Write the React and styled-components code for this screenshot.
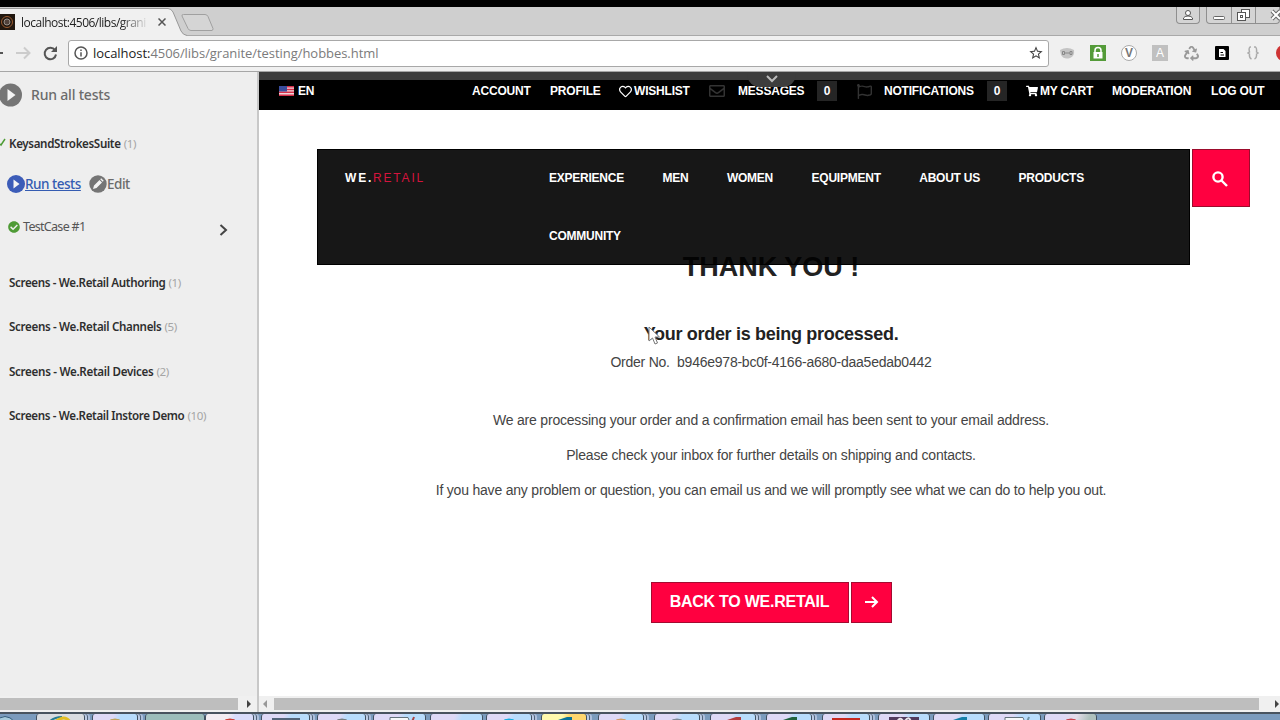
import React from 'react';
import styled, { createGlobalStyle } from 'styled-components';
import {
  FaCheckCircle,
  FaRegEnvelope,
  FaRegFlag,
  FaRegHeart,
  FaRecycle,
  FaShoppingCart,
} from 'react-icons/fa';
import { MdStarBorder } from 'react-icons/md';

const GlobalStyle = createGlobalStyle`
  * {
    box-sizing: border-box;
  }
  body {
    margin: 0;
    overflow: hidden;
    font-family: 'Liberation Sans', Arial, sans-serif;
  }
  svg {
    display: block;
    flex-shrink: 0;
  }
`;

const Screen = styled.div`
  display: flex;
  flex-direction: column;
  width: 1280px;
  height: 720px;
  overflow: hidden;
  background: #fff;
  border-top: 7px solid #000;
`;

/* browser */

const TabStrip = styled.div`
  display: flex;
  height: 29px;
  background: #cfcfcf;
  border-bottom: 1px solid #a9a9a9;
`;

const Tab = styled.div`
  position: relative;
  display: flex;
  align-items: center;
  width: 181px;
  height: 29px;
  padding-top: 1px;
  font: 12px 'Open Sans', sans-serif;
  color: #222;
  .shape {
    position: absolute;
    left: 0;
    top: 0;
  }
  .favicon,
  .close {
    position: relative;
  }
  .close {
    margin-left: 9px;
  }
`;

const TabTitle = styled.span`
  position: relative;
  width: 128px;
  margin-left: 6px;
  white-space: nowrap;
  letter-spacing: -0.5px;
  mask-image: linear-gradient(90deg, #000 78%, transparent);
`;

const NewTab = styled.div`
  padding-top: 7px;
`;

const WindowButtons = styled.div`
  display: flex;
  gap: 6px;
  margin-left: auto;
`;

const ButtonGroup = styled.div`
  display: flex;
  height: 17px;
  border: 1px solid #8f8f8f;
  border-top: 0;
  border-radius: 0 0 4px 4px;
  background: #d4d4d4;
`;

const WindowButton = styled.div`
  display: flex;
  align-items: center;
  justify-content: center;
  width: ${({ $width }) => $width}px;
  & + & {
    border-left: 1px solid #8f8f8f;
  }
`;

const Toolbar = styled.div`
  display: flex;
  align-items: center;
  height: 36px;
  flex-shrink: 0;
  padding-bottom: 1px;
  background: #f0f0f0;
  border-bottom: 1px solid #a6a6a6;
`;

const NavButtons = styled.div`
  width: 68px;
  flex-shrink: 0;
`;

const AddressBar = styled.div`
  display: flex;
  align-items: center;
  width: 981px;
  height: 27px;
  flex-shrink: 0;
  padding: 0 4px 0 5px;
  background: #fff;
  border: 1px solid #a8a8a8;
  border-radius: 3px;
`;

const Url = styled.span`
  flex: 1;
  margin-left: 5px;
  font: 13px 'Open Sans', sans-serif;
  letter-spacing: -0.05px;
  color: #7b7b7b;
  b {
    font-weight: 400;
    color: #222;
  }
`;

const Extensions = styled.div`
  display: flex;
  align-items: center;
  gap: 15px;
  margin-left: 10px;
`;

const Extension = styled.div`
  display: flex;
  align-items: center;
  justify-content: center;
  flex-shrink: 0;
  width: 16px;
  height: 16px;
  color: ${({ $color }) => $color || '#fff'};
  background: ${({ $bg }) => $bg || 'transparent'};
  border: ${({ $border }) => $border || '0'};
  border-radius: ${({ $radius }) => $radius || 0};
  font: 12px 'Liberation Sans', sans-serif;
`;

/* page */

const Body = styled.div`
  display: flex;
  height: 640px;
  flex-shrink: 0;
`;

const Sidebar = styled.aside`
  display: flex;
  flex-direction: column;
  width: 259px;
  flex-shrink: 0;
  background: #eee;
  border-right: 2px solid #c8c8c8;
  font-family: 'Noto Sans', sans-serif;
  color: #6b6b6b;
`;

const RunAll = styled.div`
  display: flex;
  align-items: center;
  gap: 9px;
  height: 49px;
  padding-bottom: 3px;
  font-size: 14px;
  font-weight: 500;
  letter-spacing: -0.2px;
  span {
    margin-top: -2px;
  }
`;

const Suite = styled.div`
  display: flex;
  align-items: center;
  height: 44.5px;
  padding-left: ${({ $open }) => ($open ? 0 : 9)}px;
  font-size: 11.6px;
  font-weight: 600;
  letter-spacing: ${({ $spacing }) => $spacing || -0.36}px;
  color: #2e2e2e;
  white-space: nowrap;
  span {
    margin-left: 3px;
    font-weight: 400;
    letter-spacing: -0.4px;
    color: #a5a5a5;
  }
`;

const SuiteActions = styled.div`
  display: flex;
  align-items: center;
  height: 37px;
  padding-left: 7px;
  font-size: 13.5px;
  font-weight: 500;
  letter-spacing: -0.48px;
`;

const Action = styled.a`
  display: flex;
  align-items: center;
  width: ${({ $width }) => $width}px;
  color: ${({ $active }) => ($active ? '#355cb2' : '#6b6b6b')};
  white-space: nowrap;
  span {
    text-decoration: ${({ $active }) => ($active ? 'underline' : 'none')};
  }
`;

const TestCase = styled.div`
  display: flex;
  align-items: center;
  height: 48px;
  margin-bottom: 9.5px;
  padding: 0 29px 0 8px;
  font-size: 12.5px;
  letter-spacing: -0.7px;
  color: #555;
  span {
    flex: 1;
    margin-left: 3px;
  }
  .chevron {
    margin-top: 6px;
  }
`;

const Scrollbar = styled.div`
  display: flex;
  align-items: center;
  height: 16px;
  margin-top: auto;
  padding: 0 ${({ $right }) => $right}px 1px ${({ $left }) => $left || 0}px;
  background: #f0f0f0;
`;

const Thumb = styled.div`
  flex: 1;
  height: 12px;
  margin: 0 ${({ $gap }) => $gap}px 0 ${({ $before }) => $before || 0}px;
  background: #bebebe;
`;

const Site = styled.main`
  display: flex;
  flex-direction: column;
  flex: 1;
  min-width: 0;
  background: #fff;
`;

const AuthorBar = styled.div`
  position: relative;
  z-index: 3;
  height: 8px;
  flex-shrink: 0;
  background: #3d3d3d;
`;

const AuthorToggle = styled.div`
  position: absolute;
  left: 488px;
  top: 2px;
  display: flex;
  justify-content: center;
  width: 49px;
  height: 13px;
  padding-top: 1px;
  background: #3d3d3d;
  border-radius: 0 0 14px 14px;
`;

const TopNav = styled.nav`
  display: flex;
  align-items: center;
  height: 30px;
  flex-shrink: 0;
  padding: 0 0 8px 20px;
  background: #000;
  color: #fff;
  font-size: 12px;
  font-weight: 700;
  letter-spacing: -0.2px;
  white-space: nowrap;
`;

const TopLink = styled.div`
  display: flex;
  align-items: center;
  width: ${({ $width }) => $width}px;
  flex-shrink: 0;
  gap: ${({ $gap }) => $gap || 2}px;
  svg {
    color: ${({ $dim }) => ($dim ? '#333' : '#fff')};
  }
`;

const Count = styled.div`
  width: 20px;
  height: 20px;
  margin-right: ${({ $after }) => $after}px;
  flex-shrink: 0;
  line-height: 20px;
  text-align: center;
  background: #252525;
`;

const Header = styled.header`
  position: relative;
  z-index: 2;
  display: flex;
  gap: 2px;
  flex-shrink: 0;
  margin: 39px 30px 0 58px;
`;

const MainNav = styled.div`
  display: flex;
  width: 873px;
  height: 116px;
  padding-left: 27px;
  background: rgba(0, 0, 0, 0.91);
  border: 1px solid #000;
  font-size: 12px;
  font-weight: 700;
  line-height: 56px;
  color: #fff;
`;

const Logo = styled.div`
  width: 204px;
  letter-spacing: 1.8px;
  span {
    font-weight: 400;
    color: #d4143d;
  }
`;

const Links = styled.div`
  display: flex;
  flex-wrap: wrap;
  flex: 1;
  align-content: flex-start;
  column-gap: 38.5px;
  row-gap: 2px;
  letter-spacing: -0.24px;
`;

const SearchButton = styled.button`
  display: flex;
  align-items: center;
  justify-content: center;
  width: 58px;
  height: 58px;
  padding: 2px 2px 0 0;
  background: #ff0040;
  border: 1px solid #9c0b2c;
  color: #fff;
`;

const Confirmation = styled.section`
  position: relative;
  z-index: 1;
  display: flex;
  flex-direction: column;
  align-items: center;
  padding-left: 3px;
  color: #222;
`;

const Title = styled.h1`
  margin: -14px 0 0;
  font-size: 27px;
  line-height: 32px;
`;

const Status = styled.h2`
  position: relative;
  margin: 41px 0 0;
  font-size: 18px;
  line-height: 21px;
  letter-spacing: -0.3px;
`;

const Pointer = styled.svg`
  position: absolute;
  left: 4px;
  top: 2px;
`;

const OrderNo = styled.p`
  margin: 7px 0 23px;
  font-size: 14px;
  line-height: 20px;
  letter-spacing: -0.24px;
  color: #444;
  white-space: pre;
`;

const Text = styled.p`
  margin: 15px 0 0;
  font-size: 14px;
  line-height: 20px;
  letter-spacing: -0.2px;
  color: #444;
  white-space: nowrap;
`;

const BackButton = styled.div`
  display: flex;
  gap: 2px;
  margin-top: 82px;
`;

const ButtonPart = styled.div`
  display: flex;
  align-items: center;
  justify-content: center;
  width: ${({ $width }) => $width}px;
  height: 41px;
  padding: 0 0 1px;
  background: #ff0040;
  border: 1px solid #a30b30;
  color: #fff;
  font-size: 16px;
  font-weight: 700;
  letter-spacing: -0.25px;
`;

/* taskbar */

const Taskbar = styled.div`
  display: flex;
  height: 9px;
  flex-shrink: 0;
  background: #7b9bbd;
  border-top: 2px solid #48535f;
`;

const Start = styled.div`
  width: 36px;
  overflow: hidden;
`;

const Task = styled.div`
  display: flex;
  justify-content: center;
  width: ${({ $width }) => $width}px;
  height: 9px;
  margin-right: ${({ $after }) => $after}px;
  flex-shrink: 0;
  overflow: hidden;
  background: ${({ $bg }) =>
    $bg || 'linear-gradient(110deg, #ded9f6 45%, #b8dcfc 60%)'};
  border: 1px solid #435161;
  border-top: 0;
  border-radius: 3px 3px 0 0;
  box-shadow: ${({ $stacked }) =>
    $stacked ? '2px 0 #bccbe5, 3px 0 #52647a, 5px 0 #aebfdc' : 'none'};
`;

const tasks = [
  { width: 49, after: 7, icon: 'chrome', color: '#e2bd23', stacked: true, bg: '#d9dce1' },
  { width: 46, after: 7, icon: 'arc', color: '#c0a45c', stacked: true },
  { width: 60, after: 0, bg: '#9cbdbb' },
  { width: 49, after: 7, icon: 'arc', color: '#ce3c33', stacked: true, bg: 'linear-gradient(110deg, #f3edf2 45%, #d9dcfa 60%)' },
  { width: 49, after: 7, icon: 'flat', color: '#53657a', stacked: true },
  { width: 49, after: 7, icon: 'arc', color: '#757d80', stacked: true },
  { width: 53, after: 4, icon: 'page', color: '#a44' },
  { width: 53, after: 3 },
  { width: 46, after: 9, icon: 'arc', color: '#12aee3', stacked: true },
  { width: 46, after: 11, icon: 'slope', color: '#087299', stacked: true, bg: 'linear-gradient(110deg, #fff9ae 45%, #ffd66e 60%)' },
  { width: 46, after: 10, icon: 'arc', color: '#d39c63', stacked: true },
  { width: 46, after: 10, icon: 'arc', color: '#7f8995', stacked: true },
  { width: 46, after: 10, icon: 'slope', color: '#b23c3e', stacked: true },
  { width: 46, after: 10, icon: 'slope', color: '#20633e', stacked: true },
  { width: 48, after: 8, icon: 'flat', color: '#c62920', stacked: true },
  { width: 52, after: 3, icon: 'eyes', color: '#513b5e' },
  { width: 52, after: 3, icon: 'slope', color: '#157fa8' },
  { width: 53, after: 3, icon: 'page', color: '#6f93a5' },
  { width: 53, after: 0, icon: 'arc', color: '#c9434e', bg: 'linear-gradient(110deg, #ded9f6 35%, #e4ddea 60%, #aec0bd 85%)' },
];

function TaskIcon({ kind, color }) {
  return (
    <svg width="32" height="7">
      {kind === 'flat' && <rect x="2" y="4" width="28" height="4" fill={color} />}
      {kind === 'arc' && <path d="M8 8q8-6 16 0" fill={color} stroke={color} />}
      {kind === 'slope' && <path d="M7 7l12-4h5v4z" fill={color} />}
      {kind === 'chrome' && (
        <>
          <path d="M4 8q5-5 13-5" fill="none" stroke="#277c92" strokeWidth="2" />
          <path d="M10 8q10-8 15 0" fill="none" stroke={color} strokeWidth="3" />
        </>
      )}
      {kind === 'page' && (
        <>
          <path d="M6 8V3.5h18l2 5" fill="#f5f8fa" stroke="#65737c" />
          <path d="M28 8l2-5" stroke={color} strokeWidth="2" />
        </>
      )}
      {kind === 'eyes' && (
        <>
          <rect x="1" y="3" width="30" height="5" fill={color} />
          <path d="M9 8q3-6 6-1M17 7q4-6 6 1" fill="none" stroke="#e9e5ea" strokeWidth="2" />
        </>
      )}
    </svg>
  );
}

const suites = [
  { name: 'Screens - We.Retail Authoring', count: 1 },
  { name: 'Screens - We.Retail Channels', count: 5, spacing: -0.33 },
  { name: 'Screens - We.Retail Devices', count: 2, spacing: -0.3 },
  { name: 'Screens - We.Retail Instore Demo', count: 10 },
];

const links = ['EXPERIENCE', 'MEN', 'WOMEN', 'EQUIPMENT', 'ABOUT US', 'PRODUCTS', 'COMMUNITY'];

function BrowserChrome() {
  return (
    <>
      <TabStrip>
        <Tab>
          <svg className="shape" width="188" height="29">
            <path d="M0 1.5H168Q171 1.5 173 5L181 24Q183 28 187 28.5V29H0Z" fill="#f0f0f0" />
            <path d="M0 1.5H168Q171 1.5 173 5L181 24Q183 28 187 28.5" fill="none" stroke="#999" />
          </svg>
          <svg className="favicon" width="15" height="16">
            <rect width="15" height="16" fill="#21170f" />
            <circle cx="7" cy="8" r="5.5" fill="none" stroke="#9b5b31" />
            <circle cx="7" cy="8" r="3" fill="#51413a" stroke="#99918b" />
          </svg>
          <TabTitle>localhost:4506/libs/grani</TabTitle>
          <svg className="close" width="8" height="8">
            <path d="M.5.5l7 7M7.5.5l-7 7" stroke="#555" strokeWidth="1.5" />
          </svg>
        </Tab>
        <NewTab>
          <svg width="34" height="17">
            <path d="M2.5.5H24q2 0 3 2l5 12q0 2-1 2H10q-2 0-3-2L1 2Q.5.5 2.5.5Z" fill="#d5d5d5" stroke="#a0a0a0" />
          </svg>
        </NewTab>
        <WindowButtons>
          <ButtonGroup>
            <WindowButton $width={22}>
              <svg width="12" height="12" fill="#fff" stroke="#555">
                <circle cx="6" cy="4" r="2.5" />
                <path d="M1.5 10.5V9q1-2 4.5-2t4.5 2v1.5Z" />
              </svg>
            </WindowButton>
          </ButtonGroup>
          <ButtonGroup>
            <WindowButton $width={24}>
              <svg width="12" height="12">
                <rect x=".5" y="7.5" width="11" height="3" rx="1" fill="#fff" stroke="#666" />
              </svg>
            </WindowButton>
            <WindowButton $width={24}>
              <svg width="13" height="13" fill="#fff" stroke="#555">
                <rect x="4.5" y=".5" width="8" height="8" />
                <rect x=".5" y="3.5" width="8" height="8" />
                <rect x="3.5" y="6.5" width="2" height="2" />
              </svg>
            </WindowButton>
            <WindowButton $width={24}>
              <svg width="24" height="12">
                <path d="M16 2l8 8M24 2l-8 8" stroke="#666" strokeWidth="4" />
                <path d="M16 2l8 8M24 2l-8 8" stroke="#fff" strokeWidth="2" />
              </svg>
            </WindowButton>
          </ButtonGroup>
        </WindowButtons>
      </TabStrip>
      <Toolbar>
        <NavButtons>
          <svg width="60" height="18" fill="none">
            <path d="M0 9h3" stroke="#555" strokeWidth="2" />
            <path d="M16 9h13M24 3.5L29.5 9 24 14.5" stroke="#ccc" strokeWidth="2" />
            <path d="M55 6.2A5.7 5.7 0 1 0 56 10.5" stroke="#555" strokeWidth="2" />
            <path d="M57 2v6h-6z" fill="#555" />
          </svg>
        </NavButtons>
        <AddressBar>
          <svg width="14" height="14" fill="none" stroke="#555" strokeWidth="1.5">
            <circle cx="7" cy="7" r="6" />
            <path d="M7 6.2v4.3M7 3.5v1.5" />
          </svg>
          <Url>
            <b>localhost:</b>4506/libs/granite/testing/hobbes.html
          </Url>
          <MdStarBorder size={16} color="#444" />
        </AddressBar>
        <Extensions>
          <Extension>
            <svg width="16" height="14">
              <path d="M1 4q7-4 14 0 1 6-4 8-6 2-9-3Z" fill="#c4c4c4" />
              <path d="M6 7h5M3.5 5.5h2v3h-2zM11 5.5h2v3h-2z" fill="none" stroke="#888" />
            </svg>
          </Extension>
          <Extension $bg="#549b39">
            <svg width="12" height="14">
              <path d="M3 7V4.5q0-3 3-3t3 3V7" fill="none" stroke="#fff" strokeWidth="1.5" />
              <path d="M1.5 6h9v6.5h-9z" fill="#fff" />
              <path d="M6 8v3" stroke="#549b39" strokeWidth="1.5" />
            </svg>
          </Extension>
          <Extension $color="#777" $bg="#fff" $border="1.5px solid #aaa" $radius="50%">
            <b>V</b>
          </Extension>
          <Extension $bg="#c0c0c0">A</Extension>
          <Extension $color="#999">
            <FaRecycle size={15} />
          </Extension>
          <Extension>
            <svg width="14" height="14">
              <rect width="14" height="14" rx="1" fill="#000" />
              <path d="M4 3h4.5l2 2v6H4z" fill="#fff" />
              <path d="M5.5 6.5H8M5.5 9H9" stroke="#000" />
            </svg>
          </Extension>
          <Extension>
            <svg width="12" height="14" fill="none" stroke="#aaa" strokeWidth="1.5">
              <path d="M4 1H3Q1.5 2 2.5 6L1 7l1.5 1q-.5 4 2 5M7 1h1.5Q10 2 9.5 6l1.5 1-1.5 1q.5 4-2 5" />
            </svg>
          </Extension>
          <Extension $bg="#cf3434" $radius="50%" />
        </Extensions>
      </Toolbar>
    </>
  );
}

function PlayIcon({ size, color }) {
  return (
    <svg width={size} height={size} viewBox="0 0 18 18">
      <circle cx="9" cy="9" r="9" fill={color} />
      <path d="M6.5 4.5L12.5 9l-6 4.5z" fill="#f4f4f4" />
    </svg>
  );
}

function TestPanel() {
  return (
    <Sidebar>
      <RunAll>
        <svg width="22" height="24">
          <circle cx="10.5" cy="12" r="11.5" fill="#757575" />
          <path d="M7.5 6L15.5 12l-8 6z" fill="#f4f4f4" />
        </svg>
        <span>Run all tests</span>
      </RunAll>
      <Suite $open>
        <svg width="9" height="10">
          <path d="M0 6l1 1 4-6" fill="none" stroke="#4e9c35" strokeWidth="1.5" />
        </svg>
        KeysandStrokesSuite<span>(1)</span>
      </Suite>
      <SuiteActions>
        <Action $active $width={82}>
          <PlayIcon size={18} color="#3c5cb8" />
          <span>Run tests</span>
        </Action>
        <Action $width={60}>
          <svg width="18" height="18">
            <circle cx="9" cy="9" r="8.7" fill="#757575" />
            <path d="M4 14l1-3.5 5.5-5.5 2.5 2.5-5.5 5.5zM11.2 4.3l1-1 2.5 2.5-1 1z" fill="#f4f4f4" />
          </svg>
          <span>Edit</span>
        </Action>
      </SuiteActions>
      <TestCase>
        <FaCheckCircle size={12} color="#4f9b36" />
        <span>TestCase #1</span>
        <svg className="chevron" width="9" height="12">
          <path d="M1.5 1L7 6l-5.5 5" fill="none" stroke="#444" strokeWidth="2" />
        </svg>
      </TestCase>
      {suites.map((suite) => (
        <Suite key={suite.name} $spacing={suite.spacing}>
          {suite.name}
          <span>({suite.count})</span>
        </Suite>
      ))}
      <Scrollbar $right={6}>
        <Thumb $gap={9} />
        <svg width="4" height="8">
          <path d="M0 0l4 4-4 4z" fill="#444" />
        </svg>
      </Scrollbar>
    </Sidebar>
  );
}

function SiteTopNav() {
  return (
    <TopNav>
      <TopLink $width={193} $gap={4}>
        <svg width="15" height="10">
          <rect width="15" height="10" fill="#f0d5da" />
          <path d="M0 .7h15M0 3.5h15M0 6.3h15M0 9.2h15" stroke="#d52e49" strokeWidth="1.4" />
          <rect width="8" height="5.5" fill="#394c9b" />
        </svg>
        EN
      </TopLink>
      <TopLink $width={78}>ACCOUNT</TopLink>
      <TopLink $width={69}>PROFILE</TopLink>
      <TopLink $width={90}>
        <FaRegHeart size={13} />
        WISHLIST
      </TopLink>
      <TopLink $width={108} $gap={13} $dim>
        <FaRegEnvelope size={16} />
        MESSAGES
      </TopLink>
      <Count $after={20}>0</Count>
      <TopLink $width={130} $gap={12} $dim>
        <FaRegFlag size={15} />
        NOTIFICATIONS
      </TopLink>
      <Count $after={19}>0</Count>
      <TopLink $width={86}>
        <FaShoppingCart size={12} />
        MY CART
      </TopLink>
      <TopLink $width={99}>MODERATION</TopLink>
      <TopLink $width={60}>LOG OUT</TopLink>
    </TopNav>
  );
}

function OrderConfirmation() {
  return (
    <Confirmation>
      <Title>THANK YOU !</Title>
      <Status>
        Your order is being processed.
        <Pointer width="13" height="19">
          <path d="M1 1v14l3.5-3 2.5 6 2.5-1-2.5-6h4.5z" fill="#fff" stroke="#777" />
        </Pointer>
      </Status>
      <OrderNo>Order No.  b946e978-bc0f-4166-a680-daa5edab0442</OrderNo>
      <Text>
        We are processing your order and a confirmation email has been sent to your email address.
      </Text>
      <Text>Please check your inbox for further details on shipping and contacts.</Text>
      <Text>
        If you have any problem or question, you can email us and we will promptly see what we can do
        to help you out.
      </Text>
      <BackButton>
        <ButtonPart $width={198}>BACK TO WE.RETAIL</ButtonPart>
        <ButtonPart $width={41}>
          <svg width="16" height="12" fill="none" stroke="#fff" strokeWidth="2">
            <path d="M2 6h12M9 1l5 5-5 5" />
          </svg>
        </ButtonPart>
      </BackButton>
    </Confirmation>
  );
}

export default function App() {
  return (
    <Screen>
      <GlobalStyle />
      <BrowserChrome />
      <Body>
        <TestPanel />
        <Site>
          <AuthorBar>
            <AuthorToggle>
              <svg width="12" height="8">
                <path d="M1 1l5 5 5-5" fill="none" stroke="#bbb" strokeWidth="2" />
              </svg>
            </AuthorToggle>
          </AuthorBar>
          <SiteTopNav />
          <Header>
            <MainNav>
              <Logo>
                WE.<span>RETAIL</span>
              </Logo>
              <Links>
                {links.map((link) => (
                  <div key={link}>{link}</div>
                ))}
              </Links>
            </MainNav>
            <SearchButton>
              <svg width="16" height="16" fill="none" stroke="#fff" strokeWidth="2.4">
                <circle cx="6" cy="6" r="4.6" />
                <path d="M9.5 9.5l5.5 5.5" />
              </svg>
            </SearchButton>
          </Header>
          <OrderConfirmation />
          <Scrollbar $left={4} $right={1}>
            <svg width="4" height="8">
              <path d="M4 0L0 4l4 4z" fill="#999" />
            </svg>
            <Thumb $before={7} $gap={16} />
            <svg width="4" height="8">
              <path d="M0 0l4 4-4 4z" fill="#444" />
            </svg>
          </Scrollbar>
        </Site>
      </Body>
      <Taskbar>
        <Start>
          <svg width="20" height="8">
            <path d="M-5 8Q5-3 15 8" fill="#a8cbdc" stroke="#355d7c" />
          </svg>
        </Start>
        {tasks.map((task, i) => (
          <Task key={i} $width={task.width} $after={task.after} $bg={task.bg} $stacked={task.stacked}>
            <TaskIcon kind={task.icon} color={task.color} />
          </Task>
        ))}
      </Taskbar>
    </Screen>
  );
}
